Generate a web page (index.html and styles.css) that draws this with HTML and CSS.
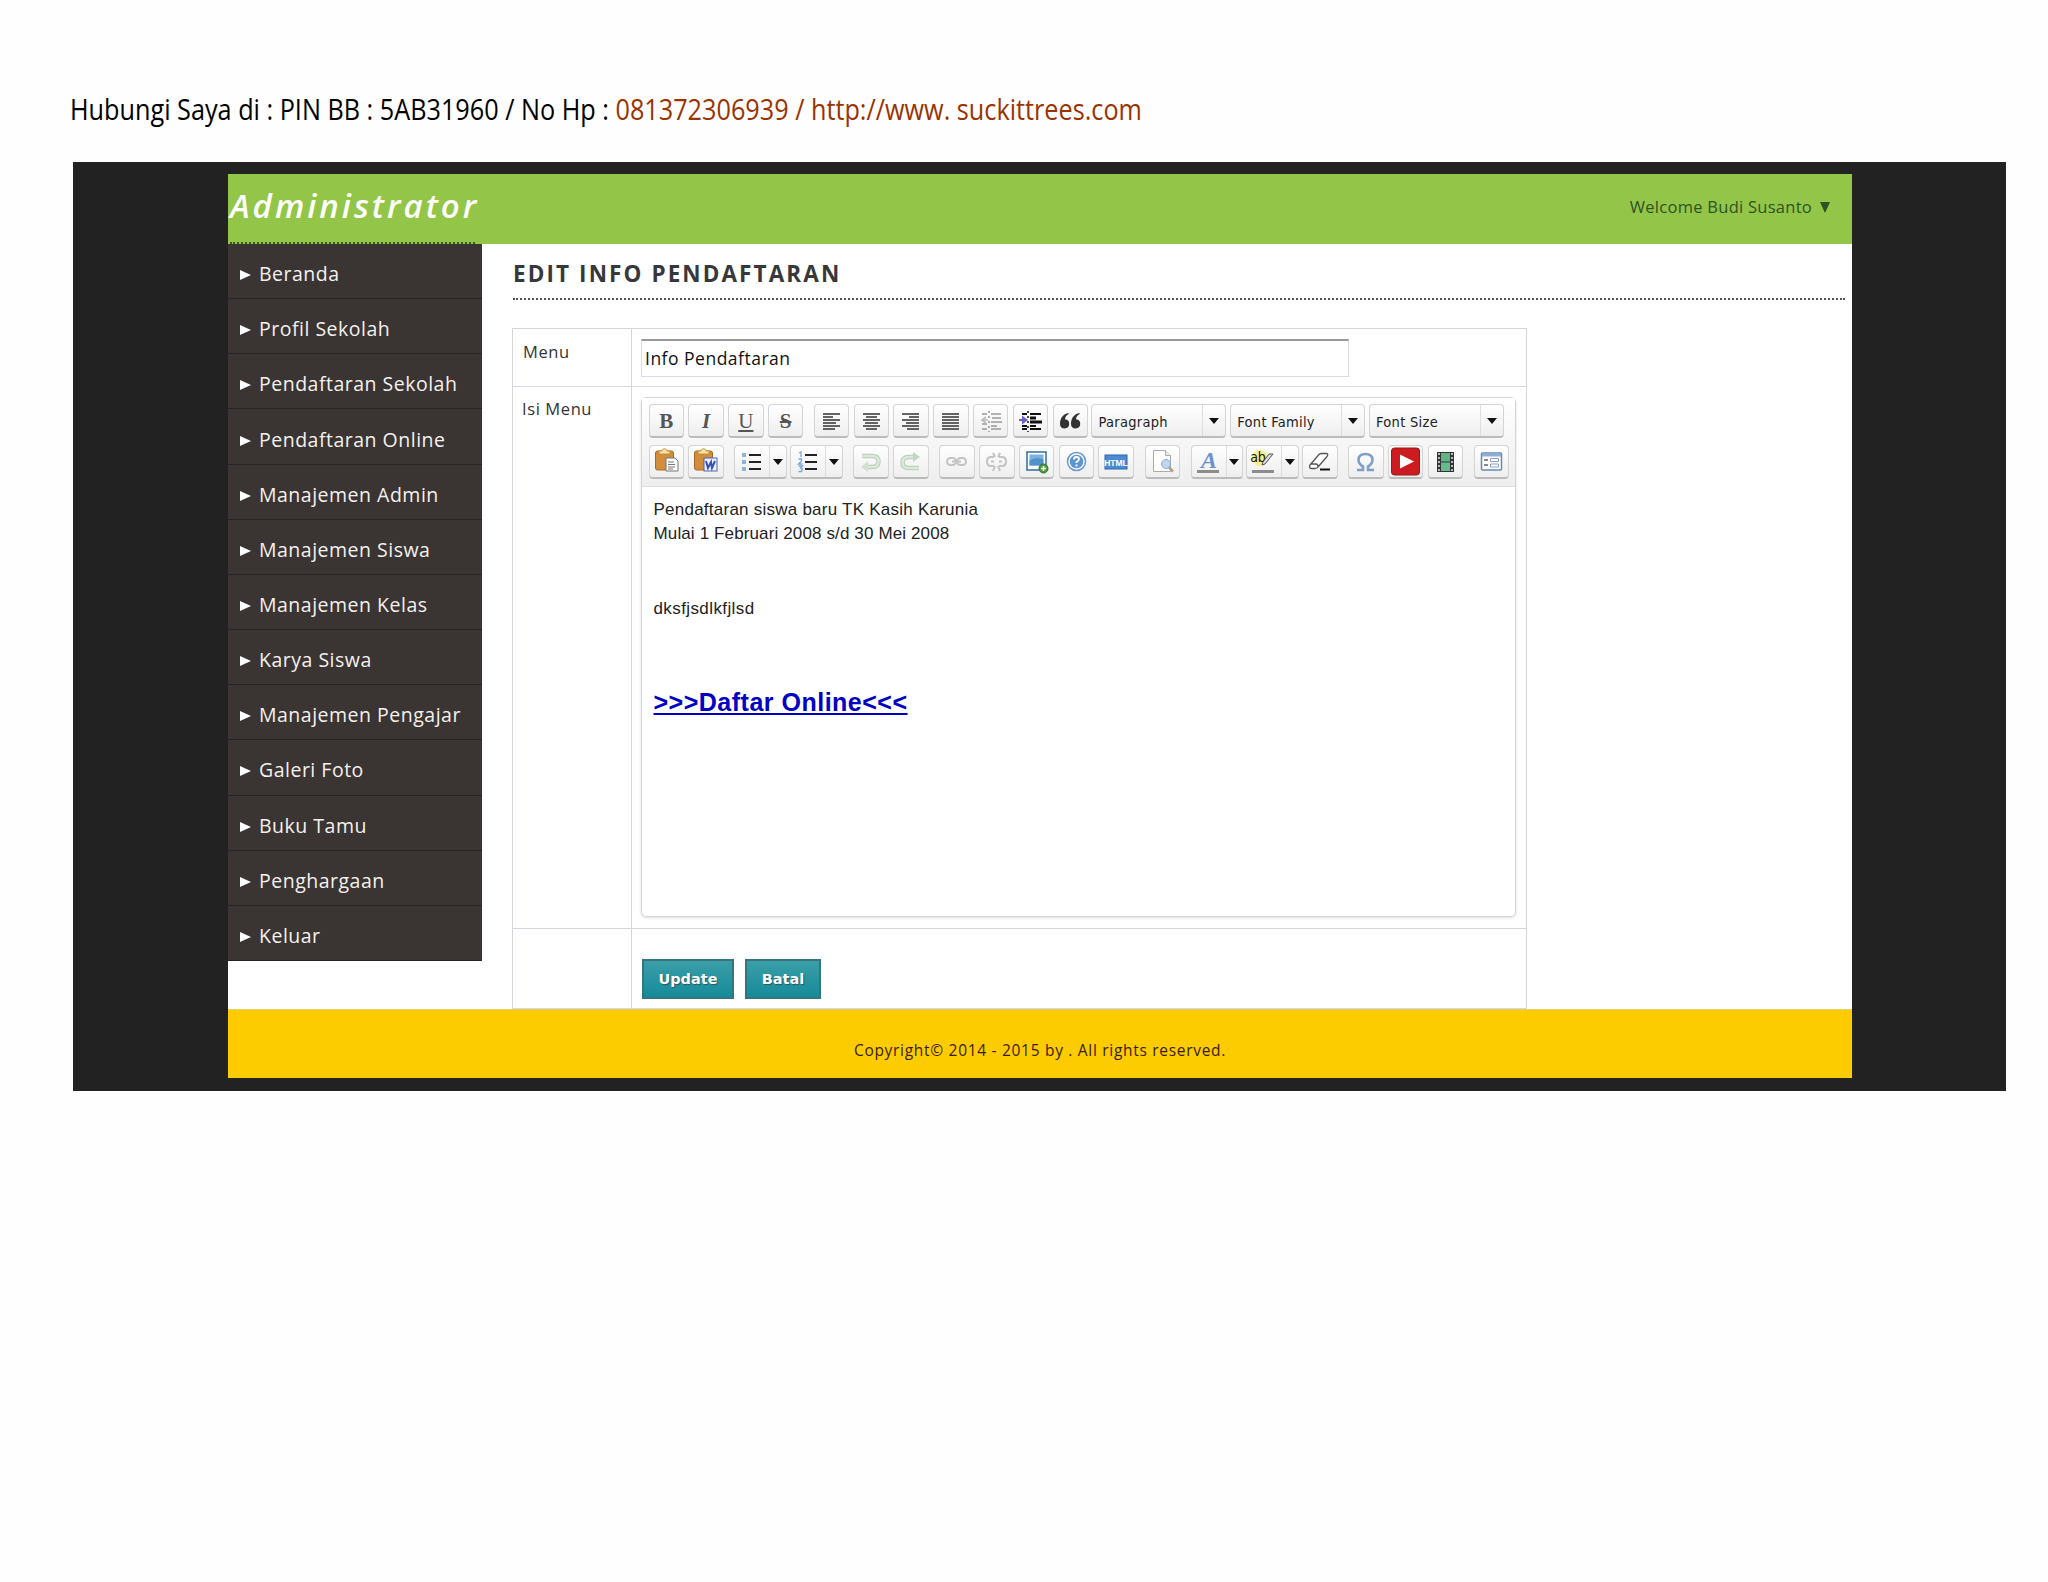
FILE: index.html
```html
<!DOCTYPE html>
<html lang="id">
<head>
    <meta charset="UTF-8">
    <meta name="viewport" content="width=device-width, initial-scale=1.0">
    <title>Administrator - Edit Info Pendaftaran</title>
    <link rel="stylesheet" href="styles.css">
</head>
<body>
    <p class="contact"><span class="contact-text">Hubungi Saya di : PIN BB : 5AB31960 / No Hp : <span class="contact-link">081372306939 / http://www. suckittrees.com</span></span></p>

    <div class="screen">
        <div class="page">
            <header class="header">
                <h1 class="logo"><span>Administrator</span></h1>
                <div class="welcome"><span class="welcome-text">Welcome Budi Susanto</span><span class="arrow-down"></span></div>
            </header>

            <div class="main">
                <ul class="sidebar">
                    <li><a>Beranda</a></li>
                    <li><a>Profil Sekolah</a></li>
                    <li><a>Pendaftaran Sekolah</a></li>
                    <li><a>Pendaftaran Online</a></li>
                    <li><a>Manajemen Admin</a></li>
                    <li><a>Manajemen Siswa</a></li>
                    <li><a>Manajemen Kelas</a></li>
                    <li><a>Karya Siswa</a></li>
                    <li><a>Manajemen Pengajar</a></li>
                    <li><a>Galeri Foto</a></li>
                    <li><a>Buku Tamu</a></li>
                    <li><a>Penghargaan</a></li>
                    <li><a>Keluar</a></li>
                </ul>

                <div class="content">
                    <h2 class="title">EDIT INFO PENDAFTARAN</h2>
                    <div class="form">
                        <div class="label">Menu</div>
                        <div class="field"><div class="text-input">Info Pendaftaran</div></div>

                        <div class="label label-isi">Isi Menu</div>
                        <div class="field">
                            <div class="editor">
                                <div class="toolbar">
                                    <div class="tool-row">
                                        <div class="group">
                                            <span class="btn letter bold">B</span>
                                            <span class="btn letter italic">I</span>
                                            <span class="btn letter under">U</span>
                                            <span class="btn letter strike">S</span>
                                        </div>
                                        <div class="group">
                                            <span class="btn"><svg viewBox="0 0 35 33"><path class="lines" d="M9 10h17M9 13h10M9 16h17M9 19h13M9 22h17M9 25h12"/></svg></span>
                                            <span class="btn"><svg viewBox="0 0 35 33"><path class="lines" d="M9 10h17M12 13h11M9 16h17M11 19h13M9 22h17M12 25h11"/></svg></span>
                                            <span class="btn"><svg viewBox="0 0 35 33"><path class="lines" d="M9 10h17M16 13h10M9 16h17M13 19h13M9 22h17M14 25h12"/></svg></span>
                                            <span class="btn"><svg viewBox="0 0 35 33"><path class="lines" d="M9 10h17M9 13h17M9 16h17M9 19h17M9 22h17M9 25h17"/></svg></span>
                                            <span class="btn"><svg viewBox="0 0 35 33"><g stroke="#999" stroke-width="1.6" fill="none"><path d="M9 10h5M18 10h10M19 14h9M9 20h5M18 18h11M18 22h6M9 25h5M18 25h10"/><path d="M16 7v21" stroke-dasharray="2 3"/><path d="M13 13l-4 3 4 3M9 16h6" stroke="#bbb"/></g></svg></span>
                                            <span class="btn"><svg viewBox="0 0 35 33"><g stroke="#111" stroke-width="2" fill="none"><path d="M9 10h5M17 10h11M9 22h5M17 22h6M9 25h5M17 25h11"/><path d="M17 14h6M17 18h12" stroke-width="3"/><path d="M15 7v21" stroke-width="1.5" stroke-dasharray="2 3"/><path d="M6 16h7" stroke="#6a62cc"/><path d="M9 11.500l6 4.500-6 4.500z" fill="#6a62cc" stroke="none"/></g></svg></span>
                                            <span class="btn"><svg viewBox="0 0 35 33"><g fill="#333"><path d="M15.500 9C10 10 7 14.500 7 20a4.600 4.600 0 1 0 5-4.700C12 13 13.500 11 15.700 10z"/><path d="M26.500 9C21 10 18 14.500 18 20a4.600 4.600 0 1 0 5-4.700C23 13 24.500 11 26.700 10z"/></g></svg></span>
                                        </div>
                                        <div class="select"><span>Paragraph</span><i class="caret"></i></div>
                                        <div class="select"><span>Font Family</span><i class="caret"></i></div>
                                        <div class="select"><span>Font Size</span><i class="caret"></i></div>
                                    </div>

                                    <div class="tool-row">
                                        <div class="group">
                                            <span class="btn"><svg viewBox="0 0 35 33"><rect x="6.500" y="6" width="18" height="19" rx="2" fill="#d18e3c" stroke="#a76a24"/><path d="M10 9V6h3c0-3 5-3 5 0h3v3z" fill="#ffe3a3" stroke="#b9812f" stroke-width=".8"/><path d="M17 13h9l3 3v10H17z" fill="#fff" stroke="#777"/><path d="M19 17h6M19 19.500h7M19 22h7M19 24h5" stroke="#777"/></svg></span>
                                            <span class="btn"><svg viewBox="0 0 35 33"><rect x="6.500" y="6" width="18" height="19" rx="2" fill="#d18e3c" stroke="#a76a24"/><path d="M10 9V6h3c0-3 5-3 5 0h3v3z" fill="#ffe3a3" stroke="#b9812f" stroke-width=".8"/><rect x="16" y="13" width="13" height="13" fill="#eef3ff" stroke="#4b62b5"/><path d="M18 16l2 7 3-6 1 6 3-7" fill="none" stroke="#3550b8" stroke-width="2"/></svg></span>
                                        </div>
                                        <div class="group lists">
                                            <span class="btn split"><svg viewBox="0 0 35 33"><path d="M15 10h12M15 17h12M15 24h12" stroke="#222" stroke-width="2"/><g fill="#8eb4dc"><rect x="8" y="8" width="4" height="4"/><rect x="8" y="15" width="4" height="4"/><rect x="8" y="22" width="4" height="4"/></g></svg><i class="caret"></i></span>
                                            <span class="btn split"><svg viewBox="0 0 35 33"><path d="M15 10h12M15 17h12M15 24h12" stroke="#222" stroke-width="2"/><path d="M9 8l2-1v5M8.500 14h3v2l-3 3h4M8.500 21h4l-2 2 2 1-1 2.500h-3" fill="none" stroke="#7ba6d4" stroke-width="1.300"/></svg><i class="caret"></i></span>
                                        </div>
                                        <div class="group">
                                            <span class="btn"><svg viewBox="0 0 35 33"><path d="M9 11h10q6.500 0 6.500 5.500t-6.500 5.500h-6" fill="none" stroke="#b7cdb7" stroke-width="4.500"/><path d="M9 11h10q6.500 0 6.500 5.500t-6.500 5.500h-6" fill="none" stroke="#dce8dc" stroke-width="2.500"/><path d="M15 16v11l-7-5z" fill="#d3e1d3"/></svg></span>
                                            <span class="btn"><svg viewBox="0 0 35 33"><path d="M22 12h-6q-6.500 0-6.500 5.500t6.500 5.500h10" fill="none" stroke="#b7cdb7" stroke-width="4.500"/><path d="M22 12h-6q-6.500 0-6.500 5.500t6.500 5.500h10" fill="none" stroke="#dce8dc" stroke-width="2.500"/><path d="M20 7v10l7-5z" fill="#c3d6c3"/></svg></span>
                                        </div>
                                        <div class="group">
                                            <span class="btn"><svg viewBox="0 0 35 33"><g fill="none" stroke="#c3c3c3" stroke-width="2"><rect x="8" y="13" width="9" height="7" rx="3.500"/><rect x="18" y="13" width="9" height="7" rx="3.500"/><path d="M13 16.500h9"/></g></svg></span>
                                            <span class="btn"><svg viewBox="0 0 35 33"><g fill="none" stroke="#c3c3c3" stroke-width="2"><path d="M15 12h-3q-4 0-4 4.500t4 4.500h3M20 12h3q4 0 4 4.500t-4 4.500h-3M14 8l2 4M21 8l-2 4M14 26l2-5M21 26l-2-5M12 16.500h3M20 16.500h3"/></g></svg></span>
                                            <span class="btn"><svg viewBox="0 0 35 33"><rect x="8" y="7" width="19" height="18" fill="#fff" stroke="#356d9b" stroke-width="1.500"/><rect x="10.500" y="9.500" width="14" height="11" fill="#79b1df"/><path d="M10.500 20.500v-5q7-4 14-1v6z" fill="#4f91c8"/><circle cx="24.500" cy="23.500" r="4.500" fill="#4f9a3d" stroke="#356f2a"/><path d="M22 23.500h5M24.500 21v5" stroke="#fff" stroke-width="1.500"/></svg></span>
                                            <span class="btn"><svg viewBox="0 0 35 33"><circle cx="17.500" cy="16.500" r="9" fill="#fff" stroke="#6699cd" stroke-width="1.500"/><circle cx="17.500" cy="16.500" r="6.800" fill="#5b96d2"/><path d="M15 14.500q0-2.500 2.500-2.500t2.500 2.300q0 1.200-2.500 2.700v1M17.500 19.500v2" fill="none" stroke="#fff" stroke-width="1.800"/></svg></span>
                                            <span class="btn"><svg viewBox="0 0 35 33"><rect x="7" y="10" width="22" height="14" fill="#4c8bd3" stroke="#2c66ad"/><text x="18" y="20.500" class="html-text">HTML</text></svg></span>
                                        </div>
                                        <div class="group">
                                            <span class="btn"><svg viewBox="0 0 35 33"><path d="M8.500 5.500h12l5 5v16h-17z" fill="#fff" stroke="#aaa"/><path d="M20.500 5.500v5h5" fill="#eee" stroke="#aaa"/><circle cx="21" cy="19" r="4.500" fill="#bdd7ef" stroke="#8fa9c4"/><path d="M24 22.500l4 4" stroke="#b79d87" stroke-width="2.500"/></svg></span>
                                        </div>
                                        <div class="group colors">
                                            <span class="btn split"><svg viewBox="0 0 35 33"><text x="18" y="23" class="color-text">A</text><rect x="6" y="25" width="22" height="3" fill="#8c8c8c"/></svg><i class="caret"></i></span>
                                            <span class="btn split"><svg viewBox="0 0 35 33"><circle cx="14" cy="13" r="8" fill="#f5f08a"/><text x="12" y="17" class="ab-text">ab</text><path d="M27 9l-8 10-3 1 1-3 6-8z" fill="#ddd" stroke="#555"/><rect x="6" y="25" width="22" height="3" fill="#8c8c8c"/></svg><i class="caret"></i></span>
                                            <span class="btn"><svg viewBox="0 0 35 33"><path d="M8 20L17 9.500q1-1 2.500-1H24q3 0 1 3L16 22q-1 1.500-3 1.500h-3q-3.500 0-2-3.500zM9 19h5q2 0 2 3" fill="#fff" stroke="#555" stroke-width="1.300"/><path d="M18 24.500h10" stroke="#111" stroke-width="2"/></svg></span>
                                        </div>
                                        <div class="group">
                                            <span class="btn"><svg viewBox="0 0 35 33"><path d="M9 25h6v-3.500Q10.500 19 10.500 14.500 11 9 17.500 9t7 5.500q0 4.500-4.500 7V25h6" fill="none" stroke="#7d9fca" stroke-width="2.600"/></svg></span>
                                            <span class="btn"><svg viewBox="0 0 35 33"><rect x="3.500" y="3" width="28" height="27" rx="3" fill="#cc1c20" stroke="#99181b"/><path d="M12 9.500v14l14-7z" fill="#fff"/></svg></span>
                                            <span class="btn"><svg viewBox="0 0 35 33"><rect x="9" y="7" width="17" height="20" fill="#333"/><rect x="13" y="8" width="9" height="8.500" fill="#5fb586"/><rect x="13" y="17.500" width="9" height="8.500" fill="#67bb8e"/><path d="M11 8v19M24 8v19" stroke="#ddd" stroke-width="1.600" stroke-dasharray="2 2"/></svg></span>
                                        </div>
                                        <div class="group">
                                            <span class="btn"><svg viewBox="0 0 35 33"><rect x="7.500" y="8" width="20" height="17" rx="1" fill="#fff" stroke="#6689b5" stroke-width="1.500"/><path d="M8 10h19" stroke="#8daed6" stroke-width="3"/><path d="M10 15h4M10 20h4" stroke="#666" stroke-width="1.500"/><path d="M16.500 13.500h8v3h-8zM16.500 19h8v3h-8z" fill="none" stroke="#8aa0bc"/></svg></span>
                                        </div>
                                    </div>
                                </div>

                                <div class="editor-body">
                                    <p><span class="line-1">Pendaftaran siswa baru TK Kasih Karunia</span><br><span class="line-2">Mulai 1 Februari 2008 s/d 30 Mei 2008</span></p>
                                    <p class="filler">dksfjsdlkfjlsd</p>
                                    <h3><a>&gt;&gt;&gt;Daftar Online&lt;&lt;&lt;</a></h3>
                                </div>
                            </div>
                        </div>

                        <div class="label"></div>
                        <div class="field buttons">
                            <button class="button update">Update</button>
                            <button class="button batal">Batal</button>
                        </div>
                    </div>
                </div>
            </div>

            <footer class="footer">Copyright© 2014 - 2015 by . All rights reserved.</footer>
        </div>
    </div>
</body>
</html>
```

FILE: styles.css
```css
* {
    box-sizing: border-box;
}
body {
    font-family: "Open Sans", "Noto Sans", sans-serif;
    margin: 0;
    background: #fefefe;
    color: #333;
}
h1, h2, h3, p, ul {
    margin: 0;
    padding: 0;
}

/* contact line */
.contact {
    height: 162px;
    padding: 89px 0 0 70px;
    font-size: 29px;
    line-height: 40px;
    color: #000;
    white-space: nowrap;
}
.contact-text {
    display: inline-block;
    transform: scaleX(0.87);
    transform-origin: left;
}
.contact-link {
    color: #993300;
}

.screen {
    width: 1933px;
    height: 929px;
    margin-left: 73px;
    padding: 12px 154px 0 155px;
    background: #222;
}
.page {
    width: 1624px;
    background: #fff;
}

/* header */
.header {
    display: flex;
    justify-content: space-between;
    height: 70px;
    background: #93c648;
}
.logo {
    width: 245px;
    margin-left: 2px;
    border-bottom: 2px dotted #3d5a1d;
    font-size: 33px;
    font-style: italic;
    font-weight: 600;
    line-height: 64px;
    letter-spacing: 3px;
    color: #fff;
    white-space: nowrap;
}
.welcome {
    display: flex;
    align-items: center;
    gap: 8px;
    height: 66px;
    margin-right: 22px;
    font-size: 16.5px;
    letter-spacing: 0.27px;
    color: #2d5223;
}
.welcome-text {
    margin-top: -2px;
}
.arrow-down {
    border: 5px solid transparent;
    border-top: 11px solid #2d5223;
    border-bottom: 0;
}

/* menu and content */
.main {
    display: flex;
    height: 765px;
}
.sidebar {
    width: 254px;
    list-style: none;
}
.sidebar li {
    display: flex;
    align-items: center;
    gap: 8px;
    height: 55.17px;
    padding: 5px 0 0 12px;
    background: #3a3433;
    border-bottom: 1px solid #292424;
    font-size: 19.5px;
    letter-spacing: 0.5px;
    color: #f4f1ee;
    white-space: nowrap;
}
.sidebar li::before {
    content: "";
    margin-top: 3px;
    border: 5.5px solid transparent;
    border-left: 11px solid #fff;
    border-right: 0;
}
.content {
    padding: 0 7px 0 31px;
    flex: 1;
}
.title {
    height: 56px;
    border-bottom: 2px dotted #555;
    font-size: 22.5px;
    line-height: 60px;
    letter-spacing: 2.1px;
    color: #36383c;
}

/* form table */
.form {
    display: grid;
    grid-template-columns: 119px 895px;
    grid-template-rows: 58px 542px 80px;
    width: 1015px;
    margin-top: 28px;
    margin-left: -1px;
    border-left: 1px solid #d6d6dc;
    border-top: 1px solid #d6d6dc;
}
.label,
.field {
    border-right: 1px solid #d6d6dc;
    border-bottom: 1px solid #d6d6dc;
}
.label {
    padding: 10px 0 0 10px;
    font-size: 16.5px;
    line-height: 26px;
    letter-spacing: 0.6px;
}
.label-isi {
    padding: 9px 0 0 9px;
}
.field {
    padding: 10px 9px 0;
}
.text-input {
    width: 708px;
    height: 38px;
    padding-left: 3px;
    border: 1px solid #dcdce4;
    border-top: 2px solid #999;
    background: #fff;
    font-size: 17.5px;
    line-height: 34px;
    letter-spacing: 0.5px;
    color: #111;
}

/* rich text editor */
.editor {
    width: 875px;
    height: 520px;
    border: 1px solid #d5d5da;
    border-radius: 5px;
    box-shadow: 0 1px 3px #ddd;
}
.toolbar {
    height: 89px;
    padding: 6px 0 0 6.5px;
    border-bottom: 1px solid #ddd;
    background: linear-gradient(#fff, #eee);
}
.tool-row {
    display: flex;
    height: 41px;
}
.group {
    display: flex;
    gap: 4.3px;
    margin-right: 10.4px;
}
.tool-row + .tool-row .group {
    margin-right: 10.6px;
}
.tool-row .lists,
.tool-row .colors {
    gap: 3px;
}
.btn,
.select {
    display: flex;
    width: 35.5px;
    height: 34px;
    border: 1px solid #d4d4d4;
    border-bottom: 2px solid #bbb;
    border-radius: 4px;
    background: linear-gradient(#fff, #eee);
}
.btn svg {
    width: 35px;
    height: 33px;
    margin: -1px 0 0 -1px;
    flex: none;
}
.split {
    width: 52.7px;
}
.letter {
    justify-content: center;
    font-family: "Liberation Serif", serif;
    font-size: 21px;
    line-height: 33px;
    color: #555;
}
.bold {
    font-weight: bold;
}
.italic {
    font-style: italic;
    font-weight: bold;
}
.under {
    text-decoration: underline;
}
.strike {
    font-weight: bold;
    text-decoration: line-through;
}
.lines {
    stroke: #333;
    stroke-width: 1.7;
}
.select {
    width: 134.5px;
    margin-right: 4.3px;
    justify-content: space-between;
    padding-left: 6px;
    font-family: "DejaVu Sans Condensed", "DejaVu Sans", sans-serif;
    font-stretch: condensed;
    font-size: 14.5px;
    line-height: 34px;
    letter-spacing: 0.3px;
    color: #222;
}
.group + .select {
    margin-left: -7px;
}
.caret {
    display: flex;
    align-items: center;
    justify-content: center;
    width: 23px;
    border-left: 1px solid #ddd;
}
.split .caret {
    width: 17px;
}
.caret::before {
    content: "";
    border: 5.5px solid transparent;
    border-top: 6px solid #111;
    border-bottom: 0;
}
.html-text {
    font: bold 8.5px "Liberation Sans", sans-serif;
    fill: #fff;
    text-anchor: middle;
}
.color-text {
    font: italic bold 24px "Liberation Serif", serif;
    fill: #6f91cc;
    text-anchor: middle;
}
.ab-text {
    font: 14px "DejaVu Sans Condensed", "DejaVu Sans", sans-serif;
    fill: #111;
    text-anchor: middle;
}
.editor-body {
    padding: 11px 11.5px;
    font-family: "Liberation Sans", Arial, sans-serif;
    font-size: 17px;
    line-height: 24px;
    color: #222;
}
.line-1 {
    letter-spacing: 0.24px;
}
.line-2 {
    letter-spacing: 0.13px;
}
.filler {
    margin-top: 51px;
    letter-spacing: 0.4px;
}
.editor-body h3 {
    margin-top: 63px;
    font-size: 25px;
    line-height: 36px;
    letter-spacing: 0.5px;
}
.editor-body a {
    color: #0000c4;
    text-decoration: underline;
}

/* form buttons */
.buttons {
    display: flex;
    gap: 11px;
    padding: 30px 0 0 10px;
}
.button {
    height: 40px;
    padding: 0;
    border: 2px solid #35757d;
    background: linear-gradient(#3a9ea8, #168b9a);
    font-family: "DejaVu Sans", sans-serif;
    font-size: 14.5px;
    font-weight: bold;
    color: #fff;
    text-shadow: 1px 1px 1px #205a62;
}
.update {
    width: 92px;
}
.batal {
    width: 76px;
}

.footer {
    height: 69px;
    border-top: 1px solid #e6cf6a;
    background: #fccb00;
    font-size: 15.5px;
    line-height: 81px;
    letter-spacing: 0.7px;
    text-align: center;
    color: #3a1d00;
}
```
